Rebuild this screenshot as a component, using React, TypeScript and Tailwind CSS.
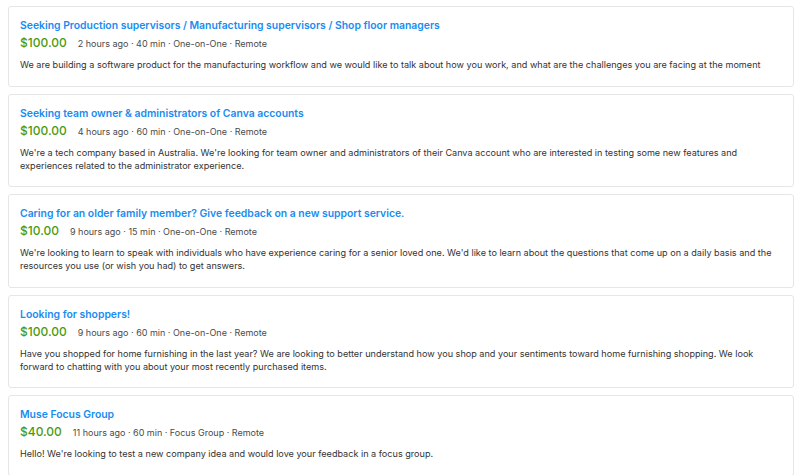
import React from "react"

type Study = {
  title: string
  price: string
  meta: string
  desc: string
}

const studies: Study[] = [
  {
    title: "Seeking Production supervisors / Manufacturing supervisors / Shop floor managers",
    price: "$100.00",
    meta: "2 hours ago · 40 min · One-on-One · Remote",
    desc: "We are building a software product for the manufacturing workflow and we would like to talk about how you work, and what are the challenges you are facing at the moment",
  },
  {
    title: "Seeking team owner & administrators of Canva accounts",
    price: "$100.00",
    meta: "4 hours ago · 60 min · One-on-One · Remote",
    desc: "We're a tech company based in Australia. We're looking for team owner and administrators of their Canva account who are interested in testing some new features and experiences related to the administrator experience.",
  },
  {
    title: "Caring for an older family member? Give feedback on a new support service.",
    price: "$10.00",
    meta: "9 hours ago · 15 min · One-on-One · Remote",
    desc: "We're looking to learn to speak with individuals who have experience caring for a senior loved one. We'd like to learn about the questions that come up on a daily basis and the resources you use (or wish you had) to get answers.",
  },
  {
    title: "Looking for shoppers!",
    price: "$100.00",
    meta: "9 hours ago · 60 min · One-on-One · Remote",
    desc: "Have you shopped for home furnishing in the last year? We are looking to better understand how you shop and your sentiments toward home furnishing shopping. We look forward to chatting with you about your most recently purchased items.",
  },
  {
    title: "Muse Focus Group",
    price: "$40.00",
    meta: "11 hours ago · 60 min · Focus Group · Remote",
    desc: "Hello! We're looking to test a new company idea and would love your feedback in a focus group.",
  },
]

function StudyCard({ study }: { study: Study }) {
  return (
    <div className="border border-[#e6e6e6] rounded-[3px] bg-white px-[11px] pt-[11px] pb-[14.5px]">
      <a href="#" className="block text-[10.4px] leading-[16px] font-semibold text-[#1a8cf0]">
        {study.title}
      </a>
      <div className="flex items-baseline gap-[11px] h-[17px]">
        <span className="text-[12px] leading-[17px] font-medium text-[#4c9a0e]">{study.price}</span>
        <span className="text-[9px] leading-[17px] text-[#4a4a4a]">{study.meta}</span>
      </div>
      <p className="mt-[7px] text-[9.1px] leading-[13px] text-[#333]">{study.desc}</p>
    </div>
  )
}

export default function App() {
  return (
    <div className="min-h-screen bg-white px-2 pt-[6px] font-['Inter',sans-serif]">
      <div className="flex flex-col gap-[7px] w-[786px]">
        {studies.map((s) => (
          <StudyCard key={s.title} study={s} />
        ))}
      </div>
    </div>
  )
}
